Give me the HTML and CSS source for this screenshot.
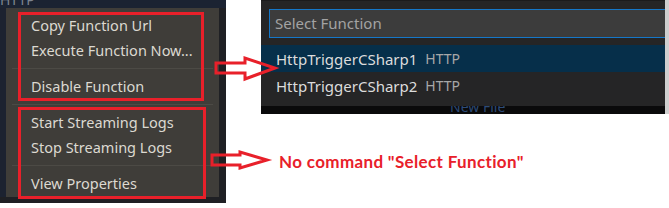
FILE: index.html
```html
<!DOCTYPE html>
<html>
<head>
<meta charset="utf-8">
<link rel="stylesheet" href="styles.css">
</head>
<body>
<div class="canvas">
  <div class="shot-left">
    <div class="editor-strip"><span class="editor-text">HTTP</span></div>
    <div class="menu-row">
      <div class="menu">
        <div class="item">Copy Function Url</div>
        <div class="item">Execute Function Now...</div>
        <div class="sep"></div>
        <div class="item">Disable Function</div>
        <div class="sep"></div>
        <div class="item">Start Streaming Logs</div>
        <div class="item">Stop Streaming Logs</div>
        <div class="sep"></div>
        <div class="item">View Properties</div>
      </div>
    </div>
  </div>
  <div class="right-col">
    <div class="quickpick">
      <div class="qp-body">
        <div class="qp-input-row">
          <div class="qp-input">Select Function</div>
        </div>
        <div class="qp-row active"><span class="label">HttpTriggerCSharp1</span><span class="desc">HTTP</span></div>
        <div class="qp-row"><span class="label">HttpTriggerCSharp2</span><span class="desc">HTTP</span></div>
        <div class="qp-bottom"><span class="newfile">New File</span></div>
      </div>
      <div class="qp-edge"></div>
    </div>
    <div class="note">No command "Select Function"</div>
  </div>

  <div class="redbox box1"></div>
  <div class="redbox box2"></div>
  <svg class="arrows" width="669" height="208" viewBox="0 0 669 208">
    <polygon points="216,63 245,63 245,58 275,68 245,79 245,73 216,73" fill="none" stroke="#e8202a" stroke-width="3" stroke-linejoin="miter"/>
    <polygon points="212,155 240,155 240,152 267,160 240,168 240,165 212,165" fill="none" stroke="#e8202a" stroke-width="3" stroke-linejoin="miter"/>
  </svg>
</div>
</body>
</html>
```

FILE: styles.css
```css
html, body {
  margin: 0;
  padding: 0;
  background: #ffffff;
}

.canvas {
  position: relative;
  width: 669px;
  height: 208px;
  display: flex;
  align-items: flex-start;
  overflow: hidden;
}

/* left screenshot */
.shot-left {
  width: 226px;
  height: 203px;
  background: #1f2024;
  display: flex;
  flex-direction: column;
  flex-shrink: 0;
}

.editor-strip {
  height: 8px;
  background: #1b2332;
  overflow: hidden;
  position: relative;
}

.editor-text {
  display: block;
  margin-left: 0;
  margin-top: -10px;
  font: 14px "Noto Sans", sans-serif;
  color: #7d8590;
}

.menu-row {
  display: flex;
  padding-left: 6px;
  height: 189px;
  background: linear-gradient(#1c2230, #1c2230) no-repeat 0 0 / 6px 100%;
}

.menu {
  width: 213px;
  height: 189px;
  background: #3f3d39;
  padding-top: 5px;
  box-sizing: border-box;
}

.item {
  height: 25px;
  line-height: 25px;
  padding-left: 25px;
  font: 14.5px/25px "Noto Sans", sans-serif;
  color: #dcd9d1;
  white-space: nowrap;
}

.sep {
  height: 11px;
  margin: 0 6px;
  background: linear-gradient(#4c4a45, #4c4a45) no-repeat 0 5px / 100% 1px;
}

/* right column */
.right-col {
  margin-left: 35px;
  display: flex;
  flex-direction: column;
}

.quickpick {
  display: flex;
  height: 114px;
}

.qp-body {
  width: 404px;
  height: 114px;
  background: #252526;
  overflow: hidden;
  display: flex;
  flex-direction: column;
  border-top: 1px solid #1b1b1c;
  box-sizing: border-box;
}

.qp-edge {
  width: 4px;
  height: 114px;
  background: #cfcfcf;
}

.qp-input-row {
  padding: 8px 0 0 8px;
  height: 36px;
  box-sizing: border-box;
}

.qp-input {
  width: 420px;
  height: 29px;
  box-sizing: border-box;
  border: 1px solid #1577c8;
  border-right: none;
  background: #3c3c3c;
  padding-left: 5px;
  font: 15px/27px "Noto Sans", sans-serif;
  color: #a3a3a3;
}

.qp-row {
  height: 27px;
  padding-left: 15px;
  display: flex;
  align-items: center;
  font: 15px "Noto Sans", sans-serif;
  white-space: nowrap;
}

.qp-row.active {
  margin-top: 8px;
  background: #062f4a;
}

.qp-row .label {
  color: #dcdcdc;
}

.qp-row .desc {
  color: #a7a7a7;
  margin-left: 8px;
  font-size: 14px;
}

.qp-bottom {
  margin-top: 7px;
  flex: 1;
  background: #0a0a0b;
  overflow: hidden;
  position: relative;
}

.newfile {
  display: block;
  margin-left: 189px;
  margin-top: -9px;
  font: 14px "Noto Sans", sans-serif;
  color: #2d4b78;
}

.note {
  margin-top: 38px;
  margin-left: 18px;
  font: bold 17px/20px "Lato", sans-serif;
  letter-spacing: 0.35px;
  color: #e8202a;
  white-space: nowrap;
}

/* annotations */
.redbox {
  position: absolute;
  border: 3px solid #e8202a;
  box-sizing: border-box;
}

.box1 {
  left: 18px;
  top: 12px;
  width: 186px;
  height: 89px;
}

.box2 {
  left: 18px;
  top: 107px;
  width: 188px;
  height: 92px;
}

.arrows {
  position: absolute;
  left: 0;
  top: 0;
  pointer-events: none;
}
```
